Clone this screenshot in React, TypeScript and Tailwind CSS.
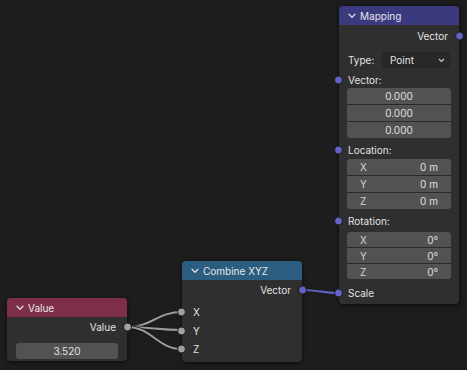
import React from "react";

const font = { fontFamily: "Inter, 'Noto Sans', sans-serif" };

const Chevron = () => (
  <svg width="8" height="6" viewBox="0 0 8 6" className="shrink-0">
    <path d="M1 1.2 L4 4.2 L7 1.2" fill="none" stroke="#dcdcdc" strokeWidth="1.3" strokeLinecap="round" strokeLinejoin="round" />
  </svg>
);

const Socket = ({ side, color }: { side: "left" | "right"; color: string }) => (
  <span
    className={
      "absolute top-1/2 -translate-y-1/2 w-[9px] h-[9px] rounded-full border border-[#1a1a1a] " +
      (side === "left" ? "left-[-5px]" : "right-[-5px]")
    }
    style={{ backgroundColor: color }}
  />
);

const VECTOR = "#6363c7";
const FLOAT = "#a1a1a1";

const Header = ({ title, color }: { title: string; color: string }) => (
  <div className={"h-[19px] flex items-center gap-[4px] pl-[9px] rounded-t-[4px] " + color}>
    <Chevron />
    <span className="text-[#e6e6e6]">{title}</span>
  </div>
);

const FieldStack = ({ rows, h }: { rows: [string, string][]; h: string }) => (
  <div className="mx-[8px] rounded-[3px] overflow-hidden flex flex-col gap-px bg-[#2b2b2b]">
    {rows.map(([l, v], i) => (
      <div key={i} className={"flex items-center justify-between px-[13px] bg-[#525252] " + h}>
        <span className="text-[#d2d2d2]">{l}</span>
        <span className="text-[#e0e0e0]">{v}</span>
      </div>
    ))}
  </div>
);

const MappingNode = () => (
  <div className="absolute left-[339px] top-[6px] w-[120px] h-[298px] rounded-[4px] bg-[#2f2f2f] shadow-[0_1px_4px_rgba(0,0,0,0.6)] flex flex-col">
    <Header title="Mapping" color="bg-[#3b3a7f]" />
    <div className="relative h-[22px] flex items-center justify-end pr-[11px]">
      <span>Vector</span>
      <Socket side="right" color={VECTOR} />
    </div>
    <div className="mt-[5px] h-[16px] flex items-center pl-[9px]">
      <span className="w-[34px]">Type:</span>
      <div className="w-[68px] h-[16px] rounded-[3px] bg-[#282828] flex items-center justify-between pl-[8px] pr-[5px]">
        <span>Point</span>
        <svg width="7" height="5" viewBox="0 0 7 5">
          <path d="M1 1 L3.5 3.5 L6 1" fill="none" stroke="#cfcfcf" strokeWidth="1.1" />
        </svg>
      </div>
    </div>
    <div className="relative mt-[4px] h-[16px] flex items-center pl-[9px]">
      <span>Vector:</span>
      <Socket side="left" color={VECTOR} />
    </div>
    <div className="mx-[8px] rounded-[3px] overflow-hidden flex flex-col gap-px bg-[#2b2b2b]">
      {["0.000", "0.000", "0.000"].map((v, i) => (
        <div key={i} className="h-[16px] flex items-center justify-center bg-[#525252] text-[#e0e0e0]">
          {v}
        </div>
      ))}
    </div>
    <div className="relative mt-[4px] h-[16px] flex items-center pl-[9px]">
      <span>Location:</span>
      <Socket side="left" color={VECTOR} />
    </div>
    <div className="mt-[1px]">
      <FieldStack rows={[["X", "0 m"], ["Y", "0 m"], ["Z", "0 m"]]} h="h-[16px]" />
    </div>
    <div className="relative mt-[4px] h-[16px] flex items-center pl-[9px]">
      <span>Rotation:</span>
      <Socket side="left" color={VECTOR} />
    </div>
    <div className="mt-[3px]">
      <FieldStack rows={[["X", "0°"], ["Y", "0°"], ["Z", "0°"]]} h="h-[15px]" />
    </div>
    <div className="relative mt-[6px] h-[16px] flex items-center pl-[9px]">
      <span>Scale</span>
      <Socket side="left" color={VECTOR} />
    </div>
  </div>
);

const CombineNode = () => (
  <div className="absolute left-[182px] top-[261px] w-[120px] h-[101px] rounded-[4px] bg-[#2f2f2f] shadow-[0_1px_4px_rgba(0,0,0,0.6)] flex flex-col">
    <Header title="Combine XYZ" color="bg-[#2a5d80]" />
    <div className="relative h-[20px] flex items-center justify-end pr-[11px]">
      <span>Vector</span>
      <Socket side="right" color={VECTOR} />
    </div>
    <div className="mt-[3px] flex flex-col">
      {["X", "Y", "Z"].map((l) => (
        <div key={l} className="relative h-[18.5px] flex items-center pl-[11px]">
          <span>{l}</span>
          <Socket side="left" color={FLOAT} />
        </div>
      ))}
    </div>
  </div>
);

const ValueNode = () => (
  <div className="absolute left-[7px] top-[298px] w-[120px] h-[63px] rounded-[4px] bg-[#2f2f2f] shadow-[0_1px_4px_rgba(0,0,0,0.6)] flex flex-col">
    <Header title="Value" color="bg-[#7c2f47]" />
    <div className="relative h-[20px] flex items-center justify-end pr-[11px]">
      <span>Value</span>
      <Socket side="right" color={FLOAT} />
    </div>
    <div className="mt-[6px] mx-[9px] h-[16px] rounded-[3px] bg-[#525252] flex items-center justify-center text-[#e0e0e0]">
      3.520
    </div>
  </div>
);

const link = (x1: number, y1: number, x2: number, y2: number) => {
  const d = Math.max(12, (x2 - x1) * 0.45);
  return `M${x1} ${y1} C${x1 + d} ${y1} ${x2 - d} ${y2} ${x2} ${y2}`;
};

export default function App() {
  return (
    <div
      className="relative w-[467px] h-[370px] overflow-hidden bg-[#1d1d1d] text-[10px] text-[#e2e2e2] leading-none"
      style={font}
    >
      <svg className="absolute inset-0" width="467" height="370">
        {[312, 330, 349].map((y) => (
          <g key={y}>
            <path d={link(127, 327, 182, y)} fill="none" stroke="#1a1a1a" strokeWidth="3.5" />
            <path d={link(127, 327, 182, y)} fill="none" stroke="#9c9c9c" strokeWidth="2" />
          </g>
        ))}
        <path d={link(302, 290, 339, 293)} fill="none" stroke="#1a1a1a" strokeWidth="3.5" />
        <path d={link(302, 290, 339, 293)} fill="none" stroke="#6464c8" strokeWidth="2" />
      </svg>
      <ValueNode />
      <CombineNode />
      <MappingNode />
    </div>
  );
}
